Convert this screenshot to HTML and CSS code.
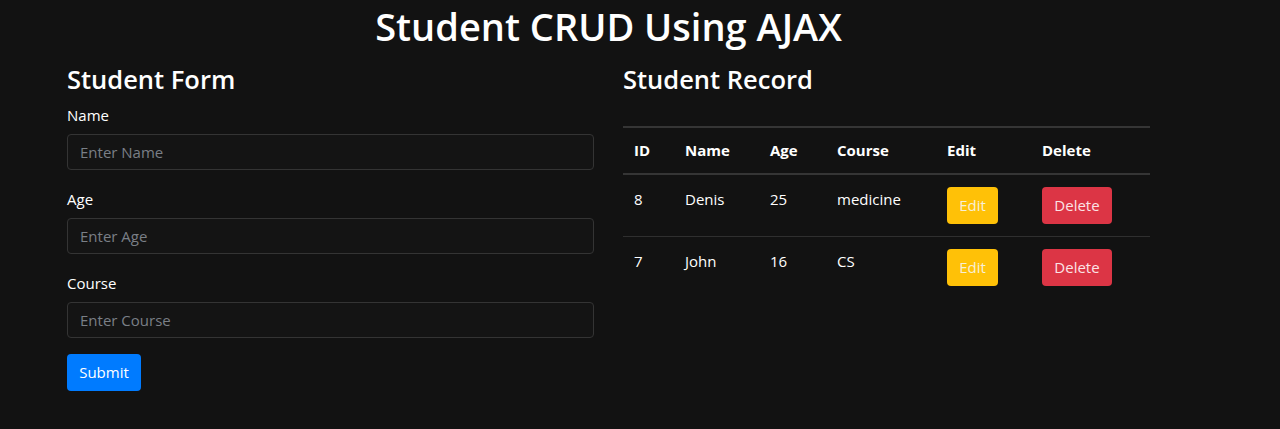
FILE: index.html
```html
<!DOCTYPE html>
<html lang="en">
<head>
<meta charset="utf-8">
<title>Student CRUD Using AJAX</title>
<link rel="stylesheet" href="styles.css">
</head>
<body>
<h1 class="page-title">Student CRUD Using AJAX</h1>
<div class="layout">
  <section class="form-col">
    <h3 class="section-title">Student Form</h3>
    <form class="student-form">
      <div class="form-group">
        <label class="form-label">Name</label>
        <input class="form-input" type="text" placeholder="Enter Name">
      </div>
      <div class="form-group">
        <label class="form-label">Age</label>
        <input class="form-input" type="text" placeholder="Enter Age">
      </div>
      <div class="form-group">
        <label class="form-label">Course</label>
        <input class="form-input" type="text" placeholder="Enter Course">
      </div>
      <button type="button" class="btn btn-primary">Submit</button>
    </form>
  </section>
  <section class="table-col">
    <h3 class="section-title">Student Record</h3>
    <table class="records">
      <colgroup>
        <col class="c-id"><col class="c-name"><col class="c-age"><col class="c-course"><col class="c-edit"><col class="c-delete">
      </colgroup>
      <thead>
        <tr><th>ID</th><th>Name</th><th>Age</th><th>Course</th><th>Edit</th><th>Delete</th></tr>
      </thead>
      <tbody>
        <tr><td>8</td><td>Denis</td><td>25</td><td>medicine</td><td><button class="btn btn-warning">Edit</button></td><td><button class="btn btn-danger">Delete</button></td></tr>
        <tr><td>7</td><td>John</td><td>16</td><td>CS</td><td><button class="btn btn-warning">Edit</button></td><td><button class="btn btn-danger">Delete</button></td></tr>
      </tbody>
    </table>
  </section>
</div>
</body>
</html>
```
FILE: styles.css
```css
* { box-sizing: border-box; }
html, body { margin: 0; padding: 0; }
body {
  background: #121212;
  color: #fff;
  font-family: "Open Sans", "Noto Sans", "Liberation Sans", sans-serif;
  font-size: 16px;
  line-height: 24px;
  height: 429px;
  overflow: hidden;
}
.page-title {
  margin: 0 0 0 67px;
  width: 1083px;
  text-align: center;
  font-size: 38px;
  font-weight: 600;
  line-height: 48px;
  padding-top: 2px;
}
.layout {
  margin-left: 67px;
  width: 1083px;
  display: grid;
  grid-template-columns: 527px 527px;
  column-gap: 29px;
  padding-top: 12px;
}
.section-title {
  margin: 0 0 8px 0;
  font-size: 25.5px;
  font-weight: 600;
  line-height: 34px;
}
.form-group { margin-bottom: 18px; }
.form-label { display: block; height: 24px; margin-bottom: 6px; font-size: 15px; line-height: 22px; }
.form-input {
  display: block;
  width: 100%;
  height: 36px;
  padding: 0 12px;
  background: #141414;
  border: 1px solid #343434;
  border-radius: 4px;
  color: #fff;
  font-family: inherit;
  font-size: 15px;
}
.form-input::placeholder { color: #7a7f86; }
.btn {
  display: inline-block;
  height: 37px;
  border: none;
  border-radius: 4px;
  font-family: inherit;
  font-size: 15px;
  line-height: 37px;
  padding: 0 12px;
  color: #fff;
}
.student-form .btn-primary { margin-top: -2px; width: 74px; padding: 0; }
.btn-primary { background: #007bff; }
.btn-warning { background: #ffc107; color: #f7efd7; width: 51px; padding: 0; }
.btn-danger { background: #dc3545; color: #fbe3e5; width: 70px; padding: 0; }
.table-col .section-title { margin-bottom: 30px; }
.records {
  width: 527px;
  border-collapse: collapse;
  table-layout: fixed;
}
.c-id { width: 51px; }
.c-name { width: 85px; }
.c-age { width: 67px; }
.c-course { width: 110px; }
.c-edit { width: 95px; }
.c-delete { width: 119px; }
.records th, .records td {
  text-align: left;
  vertical-align: top;
  padding: 12px 11px;
  font-size: 15px;
  line-height: 24px;
}
.records th { font-weight: 700; border-top: 2px solid #353535; border-bottom: 2px solid #353535; padding-top: 10px; padding-bottom: 11px; }
.records td { border-bottom: 1px solid #2f2f2f; }
.records tbody tr:last-child td { border-bottom: none; }
```
